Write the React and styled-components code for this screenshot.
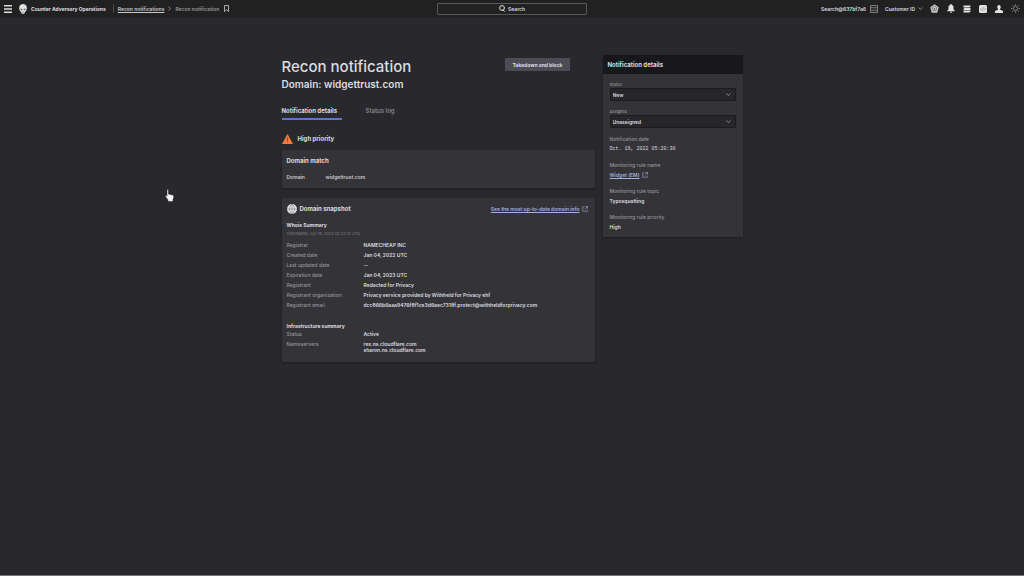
import styled, { createGlobalStyle } from "styled-components";

const GlobalStyle = createGlobalStyle`
  * {
    box-sizing: border-box;
  }
  body {
    margin: 0;
    background: #29282d;
    color: #dcdce0;
    font-family: Inter, "Liberation Sans", sans-serif;
    font-size: 5px;
    font-weight: 500;
    line-height: 6px;
  }
  h1, h2, h3, p, dl, dd {
    margin: 0;
  }
  button, select {
    font: inherit;
    color: inherit;
  }
`;

const details = [
  ["Registrar", "NAMECHEAP INC"],
  ["Created date", "Jan 04, 2022 UTC"],
  ["Last updated date", "--"],
  ["Expiration date", "Jan 04, 2023 UTC"],
  ["Registrant", "Redacted for Privacy"],
  ["Registrant organization", "Privacy service provided by Withheld for Privacy ehf"],
  ["Registrant email", "dcc866b6aaa9476f8f1ce3d6aec7318f.protect@withheldforprivacy.com"],
];

function ExternalIcon() {
  return (
    <svg width="6" height="6" viewBox="0 0 12 12" fill="none" stroke="#9aa3bd" strokeWidth="1.3">
      <path d="M5 1.5H1.5v9h9V7M7 1h4v4M11 1L5.5 6.5" />
    </svg>
  );
}

function Chevron({ right }) {
  return (
    <svg width="5" height="5" viewBox="0 0 10 10" fill="none" stroke="#a5a5a8" strokeWidth="1.6">
      <path d={right ? "M3 1l4 4-4 4" : "M1 3l4 4 4-4"} />
    </svg>
  );
}

function TopBar() {
  return (
    <Bar>
      <BarGroup>
        <IconButton aria-label="Menu">
          <svg width="8" height="8" viewBox="0 0 8 8" fill="#dedede">
            <path d="M0 0h8v1.6H0zM0 3.2h8v1.6H0zM0 6.4h8V8H0z" />
          </svg>
        </IconButton>
        <Brand>
          <svg width="8" height="10" viewBox="0 0 16 20">
            <path d="M1 4l3-3 4-1 4 1 3 3 .8 5-1.6 5-2 1.5L11 19l-3 1-3-1-1.2-3.5-2-1.500L.2 9z" fill="#e2e2e2" />
            <path d="M2.500 9l4.500 1-1 2.500H4zM13.500 9L9 10l1 2.500h2zM8 12.500l1 2H7zM5.500 16.500h5v.8h-5z" fill="#6a6a6a" />
          </svg>
          Counter Adversary Operations
        </Brand>
        <Crumbs aria-label="Breadcrumb">
          <CrumbLink href="#notifications">Recon notifications</CrumbLink>
          <Chevron right />
          <span>Recon notification</span>
          <IconButton aria-label="Bookmark">
            <svg width="5" height="7" viewBox="0 0 10 14" fill="none" stroke="#b8b8b8" strokeWidth="1.8">
              <path d="M1 1h8v12l-4-3.500L1 13z" />
            </svg>
          </IconButton>
        </Crumbs>
      </BarGroup>
      <SearchButton>
        <svg width="6" height="7" viewBox="0 0 12 14" fill="none" stroke="#e2e2e2" strokeWidth="2">
          <circle cx="6" cy="6" r="4.8" />
          <path d="M7.500 9l3.500 4" />
        </svg>
        Search
      </SearchButton>
      <BarGroup $end>
        <Account>
          Search@637bf7a6
          <svg width="8" height="8" viewBox="0 0 16 16" fill="none" stroke="#a5a5a5" strokeWidth="1.4">
            <path d="M1 1h14v14H1zM1 5.500h14M1 10.500h14" />
          </svg>
        </Account>
        <Customer>
          Customer ID
          <Chevron />
        </Customer>
        <Tools>
          <IconButton aria-label="Intelligence">
            <svg width="9" height="9" viewBox="0 0 18 18">
              <path d="M9 .5l8.500 6-3 11h-11l-3-11z" fill="#c6c6c6" />
              <path d="M9 4l4.500 3.200-1.500 6H6l-1.500-6z" fill="none" stroke="#585858" strokeWidth="1.2" />
              <circle cx="9" cy="9.5" r="1.4" fill="#585858" />
            </svg>
          </IconButton>
          <IconButton aria-label="Alerts">
            <svg width="8" height="9" viewBox="0 0 16 18" fill="#e2e2e2">
              <path d="M8 0c1 0 1.500.8 1.500 1.600C12 2.300 13 4.500 13 7v3.500l2.500 3v1H.5v-1l2.500-3V7c0-2.500 1-4.700 3.500-5.400C6.500.8 7 0 8 0zM6 15.500h4c0 3-4 3-4 0z" />
            </svg>
          </IconButton>
          <IconButton aria-label="Activity">
            <svg width="8" height="8" viewBox="0 0 16 16" fill="#e2e2e2">
              <path d="M1 1h14v2l-2 2H1zM3 6h12v4H1V8zM1 11h14v2l-2 2H1z" />
            </svg>
          </IconButton>
          <IconButton aria-label="API">
            <svg width="8" height="8" viewBox="0 0 16 16">
              <rect width="16" height="16" rx="3" fill="#e2e2e2" />
              <path d="M5.500 5L3 8l2.500 3M10.500 5L13 8l-2.500 3M9 4.500L7 11.500" fill="none" stroke="#777" strokeWidth="1.2" />
            </svg>
          </IconButton>
          <IconButton aria-label="Profile">
            <svg width="8" height="8" viewBox="0 0 16 16" fill="#e2e2e2">
              <path d="M8 0c2.500 0 3.500 2 3.500 4S10 8.500 9.500 9L16 12v4H0v-4l6.500-3C6 8.500 4.500 6 4.500 4S5.500 0 8 0z" />
            </svg>
          </IconButton>
          <IconButton aria-label="Theme">
            <svg width="9" height="9" viewBox="0 0 18 18" fill="none" stroke="#9b9b9b" strokeWidth="1.5">
              <circle cx="9" cy="9" r="4.3" />
              <path d="M9 0v3M9 15v3M0 9h3M15 9h3M2.600 2.600l2 2M13.400 13.400l2 2M2.600 15.400l2-2M13.400 4.600l2-2" />
            </svg>
          </IconButton>
        </Tools>
      </BarGroup>
    </Bar>
  );
}

function SelectField({ id, label, value }) {
  return (
    <Field>
      <FieldLabel htmlFor={id}>{label}</FieldLabel>
      <SelectBox>
        <Select id={id} defaultValue={value}>
          <option>{value}</option>
        </Select>
        <Chevron />
      </SelectBox>
    </Field>
  );
}

export default function App() {
  return (
    <Page>
      <GlobalStyle />
      <TopBar />
      <Content>
        <main>
          <Heading>
            <div>
              <Title>Recon notification</Title>
              <Subtitle>Domain: widgettrust.com</Subtitle>
            </div>
            <ActionButton>Takedown and block</ActionButton>
          </Heading>
          <Tabs role="tablist">
            <Tab role="tab" aria-selected="true" $active>Notification details</Tab>
            <Tab role="tab" aria-selected="false">Status log</Tab>
          </Tabs>
          <Priority>
            <svg width="11" height="10" viewBox="0 0 22 20">
              <path d="M11 0l11 20H0z" fill="#f07b3c" />
              <path d="M11 7v7M11 15.500v2" stroke="#7d3d20" strokeWidth="1.6" />
            </svg>
            High priority
          </Priority>
          <Card>
            <CardTitle>Domain match</CardTitle>
            <MatchRow>
              <dt>Domain</dt>
              <dd>widgettrust.com</dd>
            </MatchRow>
          </Card>
          <Card>
            <CardHead>
              <CardTitle>
                <svg width="10" height="10" viewBox="0 0 20 20">
                  <circle cx="10" cy="10" r="10" fill="#e2e2e4" />
                  <path d="M10 0v20M0 10h20M10 0C3 6 3 14 10 20M10 0c7 6 7 14 0 20" fill="none" stroke="#77767b" strokeWidth="1.1" />
                </svg>
                Domain snapshot
              </CardTitle>
              <InfoLink href="#domain">
                <span>See the most up-to-date domain info</span>
                <ExternalIcon />
              </InfoLink>
            </CardHead>
            <SectionTitle>Whois Summary</SectionTitle>
            <Timestamp>Timestamp: Oct 19, 2022 02:22:12 UTC</Timestamp>
            <DetailList>
              {details.map(([name, value]) => (
                <DetailRow key={name}>
                  <dt>{name}</dt>
                  <dd>{value}</dd>
                </DetailRow>
              ))}
            </DetailList>
            <SectionTitle $spaced>Infrastructure summary</SectionTitle>
            <DetailList>
              <DetailRow>
                <dt>Status</dt>
                <dd>Active</dd>
              </DetailRow>
              <DetailRow>
                <dt>Nameservers</dt>
                <dd>
                  rex.ns.cloudflare.com
                  <br />
                  sharon.ns.cloudflare.com
                </dd>
              </DetailRow>
            </DetailList>
          </Card>
        </main>
        <Panel>
          <PanelTitle>Notification details</PanelTitle>
          <PanelBody>
            <SelectField id="status" label="Status" value="New" />
            <SelectField id="assignee" label="Assignee" value="Unassigned" />
            <Facts>
              <Fact>
                <dt>Notification date</dt>
                <Mono>Oct. 19, 2022 05:20:30</Mono>
              </Fact>
              <Fact>
                <dt>Monitoring rule name</dt>
                <dd>
                  <InfoLink href="#rule">
                    <span>Widget (EM)</span>
                    <ExternalIcon />
                  </InfoLink>
                </dd>
              </Fact>
              <Fact>
                <dt>Monitoring rule topic</dt>
                <dd>Typosquatting</dd>
              </Fact>
              <Fact>
                <dt>Monitoring rule priority</dt>
                <dd>High</dd>
              </Fact>
            </Facts>
          </PanelBody>
        </Panel>
      </Content>
      <Pointer width="9" height="13" viewBox="0 0 18 26">
        <path d="M4 2c0-2 3-2 3 0v8l8 2c2 .5 3 2 2.500 4L16 21v4H6v-3l-5-7c-1-2 1-3 3-1z" fill="#f4f4f4" stroke="#222" strokeWidth="1" />
      </Pointer>
    </Page>
  );
}

const Page = styled.div`
  min-height: 100vh;
  border-bottom: 1px solid #77757c;
`;

const Bar = styled.header`
  display: grid;
  grid-template-columns: 1fr 150px 1fr;
  align-items: center;
  height: 18px;
  padding: 0 4px;
  background: #212121;
  border-bottom: 1px solid #28222d;
`;

const BarGroup = styled.div`
  display: flex;
  align-items: center;
  justify-content: ${({ $end }) => ($end ? "flex-end" : "flex-start")};
  gap: 7px;
  white-space: nowrap;
`;

const IconButton = styled.button`
  display: flex;
  padding: 0;
  border: 0;
  background: none;
`;

const Brand = styled.div`
  display: flex;
  align-items: center;
  gap: 4px;
  font-weight: 700;
`;

const Crumbs = styled.nav`
  display: flex;
  align-items: center;
  gap: 3px;
  height: 9px;
  padding-left: 4px;
  border-left: 1px solid #4a4a4a;
  color: #98989b;
  font-weight: 600;

  button {
    margin-left: 2px;
  }
`;

const CrumbLink = styled.a`
  color: #c9c9cc;
  text-decoration: underline;
`;

const SearchButton = styled.button`
  display: flex;
  align-items: center;
  justify-content: center;
  gap: 3px;
  height: 12px;
  padding: 0;
  border: 1px solid #59595a;
  border-radius: 1px;
  background: #222;
  font-weight: 600;
`;

const Account = styled.div`
  display: flex;
  align-items: center;
  gap: 4px;
  font-weight: 600;
`;

const Customer = styled.button`
  display: flex;
  align-items: center;
  gap: 3px;
  padding: 0;
  border: 0;
  background: none;
  font-weight: 600;
`;

const Tools = styled.div`
  display: flex;
  align-items: center;
  gap: 8px;
`;

const Content = styled.div`
  display: grid;
  grid-template-columns: minmax(0, 1fr) 140px;
  align-items: start;
  gap: 8px;
  max-width: 461px;
  margin: 0 auto;
  padding-top: 37px;
`;

const Heading = styled.div`
  display: flex;
  align-items: flex-start;
  justify-content: space-between;
  padding: 3px 25px 0 0;
`;

const Title = styled.h1`
  font-size: 15px;
  font-weight: 500;
  line-height: 18px;
`;

const Subtitle = styled.h2`
  margin-top: 2px;
  font-size: 10px;
  font-weight: 600;
  line-height: 12px;
`;

const ActionButton = styled.button`
  height: 13px;
  padding: 0 7px;
  border: 0;
  border-radius: 1px;
  background: #4c4b56;
  font-weight: 700;
`;

const Tabs = styled.div`
  display: flex;
  gap: 24px;
  margin-top: 15px;
`;

const Tab = styled.button`
  min-width: ${({ $active }) => ($active ? "60px" : 0)};
  height: 15px;
  padding: 1px 0 3px;
  border: 0;
  border-bottom: 2px solid ${({ $active }) => ($active ? "#5c74d6" : "transparent")};
  background: none;
  color: ${({ $active }) => ($active ? "#dcdce0" : "#85848a")};
  font-size: 6px;
  font-weight: ${({ $active }) => ($active ? 700 : 600)};
  text-align: left;
`;

const Priority = styled.p`
  display: flex;
  align-items: center;
  gap: 5px;
  margin: 14px 0 6px;
  font-size: 6px;
  font-weight: 700;
  line-height: 10px;
`;

const Card = styled.section`
  padding: 6px 7px 6px 5px;
  border-radius: 1px;
  background: #343337;
  box-shadow: 0 1px 2px #1d1c20;

  & + & {
    margin-top: 10px;
  }
`;

const CardHead = styled.div`
  display: flex;
  align-items: center;
  justify-content: space-between;
  margin-bottom: 8px;
  font-weight: 600;
`;

const CardTitle = styled.h2`
  display: flex;
  align-items: center;
  gap: 3px;
  font-size: 6px;
  font-weight: 700;
  line-height: 10px;
`;

const MatchRow = styled.dl`
  display: grid;
  grid-template-columns: 39px 1fr;
  padding: 8px 0 2px;
  color: #c9c9cd;
  font-weight: 600;
`;

const InfoLink = styled.a`
  display: inline-flex;
  align-items: center;
  gap: 2px;
  color: #9fb1df;
  text-decoration: none;

  span {
    text-decoration: underline;
  }
`;

const SectionTitle = styled.h3`
  margin-top: ${({ $spaced }) => ($spaced ? "12px" : 0)};
  font-size: 5px;
  font-weight: 700;
  line-height: 6px;
`;

const Timestamp = styled.p`
  margin: 3px 0;
  color: #828187;
  font-size: 4px;
  font-weight: 400;
`;

const DetailList = styled.dl`
  padding-top: 1px;
`;

const DetailRow = styled.div`
  display: grid;
  grid-template-columns: 77px 1fr;
  padding: 1px 0 3px;

  dt {
    color: #96959b;
  }
  dd {
    font-weight: 600;
  }
`;

const Panel = styled.aside`
  background: #343337;
  box-shadow: 0 1px 2px #1d1c20;
`;

const PanelTitle = styled.h2`
  padding: 0 5px;
  background: #18171b;
  font-size: 6px;
  font-weight: 700;
  line-height: 19px;
`;

const PanelBody = styled.div`
  padding: 8px 7px 5px;
`;

const Field = styled.div`
  margin-bottom: 8px;

  & + & {
    margin-bottom: 6px;
  }
`;

const FieldLabel = styled.label`
  display: block;
  color: #96959b;
  font-size: 4px;
  line-height: 6px;
`;

const SelectBox = styled.div`
  display: flex;
  align-items: center;
  height: 13px;
  padding-right: 4px;
  border: 1px solid #1c1b1e;
  border-radius: 1px;
  background: #272629;
  font-weight: 600;
`;

const Select = styled.select`
  flex: 1;
  padding: 0 2px;
  border: 0;
  appearance: none;
  background: transparent;
`;

const Facts = styled.dl`
  display: grid;
  gap: 6px;
`;

const Fact = styled.div`
  display: grid;
  grid-auto-rows: 10px;
  font-weight: 600;
  line-height: 10px;

  dt {
    color: #96959b;
    font-weight: 500;
  }
`;

const Mono = styled.dd`
  font-family: "Liberation Mono", monospace;
  font-weight: 400;
`;

const Pointer = styled.svg`
  position: absolute;
  left: 165px;
  top: 189px;
`;
